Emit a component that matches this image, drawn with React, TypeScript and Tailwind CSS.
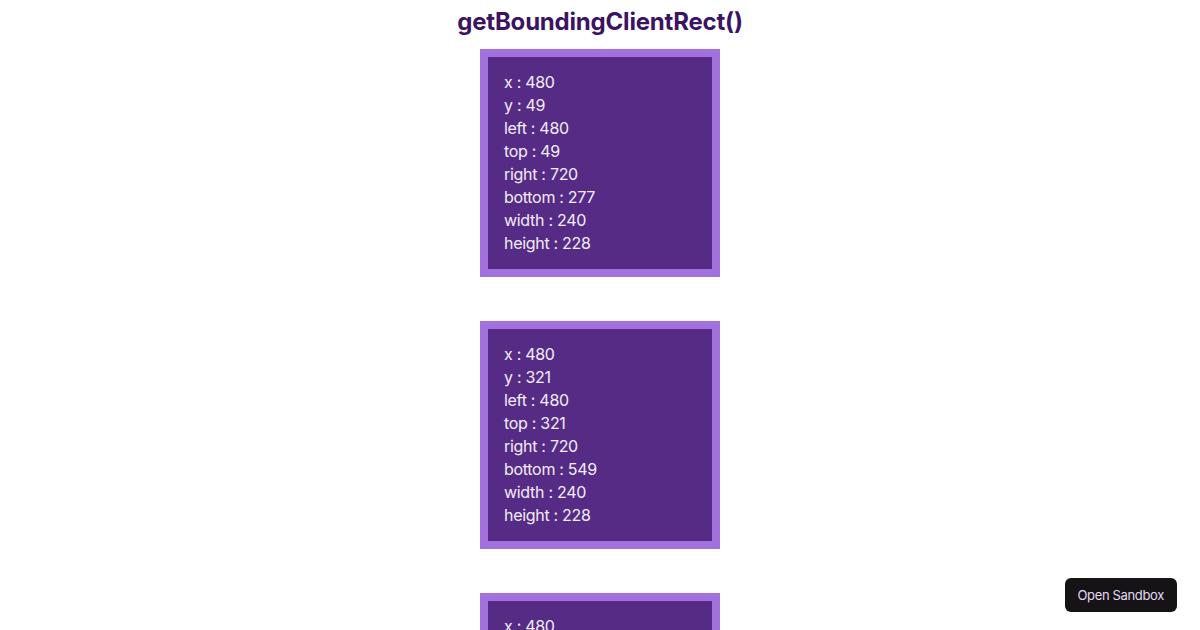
const boxes = [49, 321, 593];

function RectBox({ top }: { top: number }) {
  const rows: [string, number][] = [
    ["x", 480],
    ["y", top],
    ["left", 480],
    ["top", top],
    ["right", 720],
    ["bottom", top + 228],
    ["width", 240],
    ["height", 228],
  ];
  return (
    <div className="box-border h-[228px] w-[240px] shrink-0 border-8 border-[#a271dd] bg-[#552b85] px-4 pt-[13.5px] text-[16px] leading-[23px] tracking-[-0.3px] text-[#f3eefa]">
      {rows.map(([k, v]) => (
        <div key={k}>
          {k} : {v}
        </div>
      ))}
    </div>
  );
}

export default function App() {
  return (
    <div className="relative h-[630px] w-full overflow-hidden bg-white font-['Inter','Noto_Sans',sans-serif]">
      <h1 className="pt-[6px] pb-[11px] text-center text-[24px] leading-8 font-bold tracking-[-0.2px] text-[#3c1363]">
        getBoundingClientRect()
      </h1>
      <div className="flex flex-col items-center gap-[44px]">
        {boxes.map((t) => (
          <RectBox key={t} top={t} />
        ))}
      </div>
      <button className="fixed right-[23px] bottom-[18px] rounded-md bg-[#151316] px-[13px] py-[8px] text-[13px] leading-[18px] tracking-[-0.35px] text-[#e4daf2]">
        Open Sandbox
      </button>
    </div>
  );
}
